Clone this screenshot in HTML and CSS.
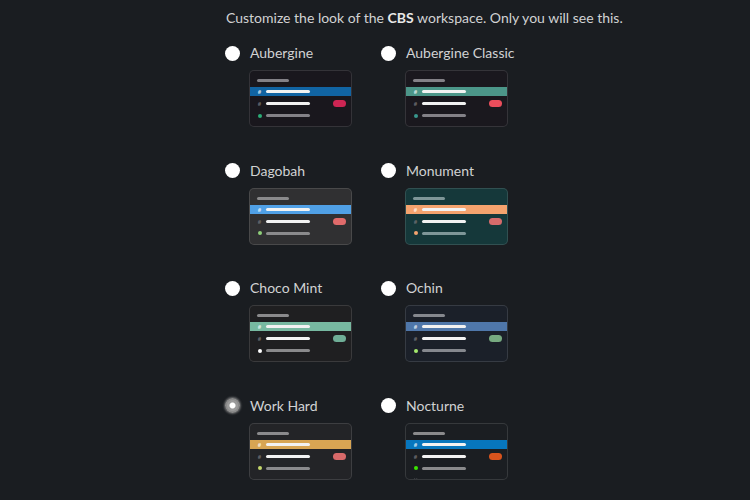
FILE: index.html
```html
<!DOCTYPE html>
<html>
<head>
<meta charset="utf-8">
<link rel="stylesheet" href="styles.css">
</head>
<body>
<div class="page">
  <p class="intro">Customize the look of the <b>CBS</b> workspace. Only you will see this.</p>
  <div class="grid">

    <div class="theme t-aubergine">
      <div class="opt"><span class="radio"></span><span class="name">Aubergine</span></div>
      <div class="card">
        <div class="top"></div>
        <div class="row hl"><span class="ic">#</span><span class="bar"></span></div>
        <div class="row"><span class="ic">#</span><span class="bar"></span><span class="pill"></span></div>
        <div class="row"><span class="ic"><span class="dot"></span></span><span class="bar gray"></span></div>
      </div>
    </div>

    <div class="theme t-classic">
      <div class="opt"><span class="radio"></span><span class="name">Aubergine Classic</span></div>
      <div class="card">
        <div class="top"></div>
        <div class="row hl"><span class="ic">#</span><span class="bar"></span></div>
        <div class="row"><span class="ic">#</span><span class="bar"></span><span class="pill"></span></div>
        <div class="row"><span class="ic"><span class="dot"></span></span><span class="bar gray"></span></div>
      </div>
    </div>

    <div class="theme t-dagobah">
      <div class="opt"><span class="radio"></span><span class="name">Dagobah</span></div>
      <div class="card">
        <div class="top"></div>
        <div class="row hl"><span class="ic">#</span><span class="bar"></span></div>
        <div class="row"><span class="ic">#</span><span class="bar"></span><span class="pill"></span></div>
        <div class="row"><span class="ic"><span class="dot"></span></span><span class="bar gray"></span></div>
      </div>
    </div>

    <div class="theme t-monument">
      <div class="opt"><span class="radio"></span><span class="name">Monument</span></div>
      <div class="card">
        <div class="top"></div>
        <div class="row hl"><span class="ic">#</span><span class="bar"></span></div>
        <div class="row"><span class="ic">#</span><span class="bar"></span><span class="pill"></span></div>
        <div class="row"><span class="ic"><span class="dot"></span></span><span class="bar gray"></span></div>
      </div>
    </div>

    <div class="theme t-choco">
      <div class="opt"><span class="radio"></span><span class="name">Choco Mint</span></div>
      <div class="card">
        <div class="top"></div>
        <div class="row hl"><span class="ic">#</span><span class="bar"></span></div>
        <div class="row"><span class="ic">#</span><span class="bar"></span><span class="pill"></span></div>
        <div class="row"><span class="ic"><span class="dot"></span></span><span class="bar gray"></span></div>
      </div>
    </div>

    <div class="theme t-ochin">
      <div class="opt"><span class="radio"></span><span class="name">Ochin</span></div>
      <div class="card">
        <div class="top"></div>
        <div class="row hl"><span class="ic">#</span><span class="bar"></span></div>
        <div class="row"><span class="ic">#</span><span class="bar"></span><span class="pill"></span></div>
        <div class="row"><span class="ic"><span class="dot"></span></span><span class="bar gray"></span></div>
      </div>
    </div>

    <div class="theme t-workhard">
      <div class="opt"><span class="radio checked"></span><span class="name">Work Hard</span></div>
      <div class="card">
        <div class="top"></div>
        <div class="row hl"><span class="ic">#</span><span class="bar"></span></div>
        <div class="row"><span class="ic">#</span><span class="bar"></span><span class="pill"></span></div>
        <div class="row"><span class="ic"><span class="dot"></span></span><span class="bar gray"></span></div>
      </div>
    </div>

    <div class="theme t-nocturne">
      <div class="opt"><span class="radio"></span><span class="name">Nocturne</span></div>
      <div class="card">
        <div class="top"></div>
        <div class="row hl"><span class="ic">#</span><span class="bar"></span></div>
        <div class="row"><span class="ic">#</span><span class="bar"></span><span class="pill"></span></div>
        <div class="row"><span class="ic"><span class="dot"></span></span><span class="bar gray"></span></div>
        <div class="row"><span class="ic"><svg class="hash" viewBox="0 0 6 6" width="5" height="5"><path d="M2 0.5 L1.5 5.5 M4.5 0.5 L4 5.5 M0.5 2 H5.5 M0.3 4 H5.3" stroke="#6c6c70" stroke-width="0.9" fill="none"/></svg></span><span class="bar gray"></span></div>
      </div>
    </div>

  </div>
</div>
</body>
</html>
```

FILE: styles.css
```css
html, body {
  margin: 0;
  padding: 0;
  background: #1a1d21;
}
body {
  font-family: Lato, "Noto Sans", sans-serif;
  color: #d1d2d3;
  height: 500px;
  overflow: hidden;
}
.page {
  padding: 8px 0 0 226px;
}
.intro {
  margin: 0;
  font-size: 14px;
  line-height: 20px;
  color: #d1d2d3;
}
.intro b {
  font-weight: 700;
  color: #e8e8e8;
}
.grid {
  display: grid;
  grid-template-columns: 156px 156px;
  row-gap: 33.5px;
  margin-top: 15px;
  margin-left: -1px;
}
.opt {
  display: flex;
  align-items: center;
  height: 20px;
  gap: 10px;
}
.radio {
  width: 15px;
  height: 15px;
  border-radius: 50%;
  background: #ffffff;
  flex: none;
}
.radio.checked {
  background: radial-gradient(circle, #ffffff 0 2.5px, #9a9a9a 3.5px 5px, #8a8a8a 6px);
  box-shadow: 0 0 2px 1px rgba(160,160,160,0.6);
}
.name {
  font-size: 14px;
  line-height: 20px;
  color: #d1d2d3;
}
.card {
  margin: 7px 0 0 24px;
  width: 103px;
  height: 57px;
  box-sizing: border-box;
  border: 1px solid rgba(255,255,255,0.12);
  border-radius: 5px;
  overflow: hidden;
  padding-top: 8px;
  background: var(--bg);
}
.top {
  width: 32px;
  height: 3px;
  border-radius: 2px;
  margin-left: 7px;
  background: var(--gray);
}
.row {
  display: flex;
  align-items: center;
  height: 9px;
  margin-top: 3px;
  padding-left: 6px;
}
.row.hl {
  margin-top: 5px;
  background: var(--hl);
}
.ic {
  width: 7px;
  margin-right: 3px;
  font-size: 6px;
  line-height: 9px;
  font-weight: 700;
  color: #6c6c70;
  display: flex;
  align-items: center;
  justify-content: center;
}
.row.hl .ic {
  color: rgba(255,255,255,0.8);
}
.bar {
  width: 44px;
  height: 3px;
  border-radius: 2px;
  background: #f2f2f2;
}
.bar.gray {
  background: var(--gray);
}
.pill {
  width: 13px;
  height: 7px;
  border-radius: 4px;
  margin-left: 23px;
  background: var(--pill);
}
.dot {
  width: 4px;
  height: 4px;
  border-radius: 50%;
  background: var(--dot);
}

.t-aubergine { --bg: #19171d; --hl: #1164a3; --pill: #cd2553; --dot: #2bac76; --gray: #838187; }
.t-classic   { --bg: #1a181e; --hl: #4c9689; --pill: #eb4d5c; --dot: #38978d; --gray: #838187; }
.t-dagobah   { --bg: #303032; --hl: #50a0e6; --pill: #e06b6b; --dot: #8fcf7a; --gray: #8a8a8c; }
.t-monument  { --bg: #15383a; --hl: #f4a36e; --pill: #d66b6b; --dot: #f4a36e; --gray: #7e9698; }
.t-choco     { --bg: #1f1f21; --hl: #77b9a1; --pill: #6fae97; --dot: #ffffff; --gray: #8a8a8c; }
.t-ochin     { --bg: #1b2029; --hl: #4f77aa; --pill: #77aa80; --dot: #a3e86d; --gray: #85888e; }
.t-workhard  { --bg: #232427; --hl: #d8a553; --pill: #d86a6a; --dot: #c4d76b; --gray: #8a8a8c; }
.t-nocturne  { --bg: #1b1e22; --hl: #0776bd; --pill: #d9541d; --dot: #3ae600; --gray: #8a8a8c; }
```
